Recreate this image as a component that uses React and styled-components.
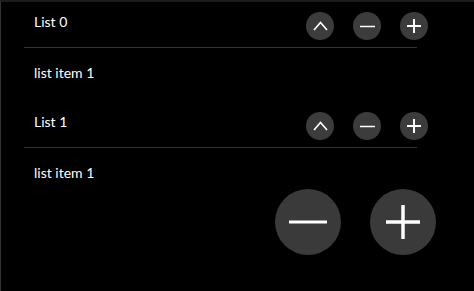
import React from "react";
import styled, { createGlobalStyle } from "styled-components";

const GlobalStyle = createGlobalStyle`
  html, body {
    margin: 0;
    padding: 0;
    background: #000;
  }
  body {
    font-family: Lato, "Open Sans", sans-serif;
    color: #fff;
  }
`;

const lists = [
  { title: "List 0", items: ["list item 1"] },
  { title: "List 1", items: ["list item 1"] },
];

const App = () => {
  return (
    <Page>
      <GlobalStyle />
      {lists.map((list) => (
        <Section key={list.title}>
          <Header>
            <Title>{list.title}</Title>
            <Actions>
              <RoundButton aria-label="collapse">
                <ChevronUp />
              </RoundButton>
              <RoundButton aria-label="remove">
                <Minus size={15} stroke={1.5} />
              </RoundButton>
              <RoundButton aria-label="add">
                <Plus size={14} stroke={2} />
              </RoundButton>
            </Actions>
          </Header>
          <Divider />
          {list.items.map((item) => (
            <Item key={item}>{item}</Item>
          ))}
        </Section>
      ))}
      <Fabs>
        <Fab aria-label="remove list">
          <Minus size={38} stroke={3} />
        </Fab>
        <Fab aria-label="add list">
          <Plus size={34} stroke={3.5} />
        </Fab>
      </Fabs>
    </Page>
  );
};

export default App;

const ChevronUp = () => (
  <svg width="15" height="10" viewBox="0 0 15 10">
    <path d="M1 9 L7.5 1.5 L14 9" fill="none" stroke="#fff" strokeWidth="1.6" />
  </svg>
);

const Minus = ({ size, stroke }) => (
  <svg width={size} height={size} viewBox={`0 0 ${size} ${size}`}>
    <line x1="0" y1={size / 2} x2={size} y2={size / 2} stroke="#fff" strokeWidth={stroke} />
  </svg>
);

const Plus = ({ size, stroke }) => (
  <svg width={size} height={size} viewBox={`0 0 ${size} ${size}`}>
    <line x1="0" y1={size / 2} x2={size} y2={size / 2} stroke="#fff" strokeWidth={stroke} />
    <line x1={size / 2} y1="0" x2={size / 2} y2={size} stroke="#fff" strokeWidth={stroke} />
  </svg>
);

const Page = styled.div`
  position: relative;
  box-sizing: border-box;
  height: 291px;
  background: #000;
  border-top: 2px solid #1c1c1c;
  border-left: 1px solid #333;
  overflow: hidden;
`;

const Section = styled.section`
  height: 100px;
`;

const Header = styled.div`
  display: flex;
  align-items: flex-start;
  box-sizing: border-box;
  height: 45px;
  padding: 10px 0 0 33px;
  margin-right: 46px;
`;

const Title = styled.div`
  flex: 1;
  font-size: 14px;
  line-height: 20px;
`;

const Actions = styled.div`
  display: flex;
  gap: 19px;
`;

const RoundButton = styled.button`
  display: flex;
  align-items: center;
  justify-content: center;
  width: 28px;
  height: 28px;
  padding: 0;
  border: none;
  border-radius: 50%;
  background: #3c3c3c;
`;

const Divider = styled.div`
  height: 1px;
  background: #333;
  margin: 0 57px 0 23px;
`;

const Item = styled.div`
  padding: 15px 0 0 33px;
  font-size: 14px;
  line-height: 20px;
`;

const Fabs = styled.div`
  position: absolute;
  right: 38px;
  bottom: 36px;
  display: flex;
  gap: 29px;
`;

const Fab = styled.button`
  display: flex;
  align-items: center;
  justify-content: center;
  width: 66px;
  height: 66px;
  padding: 0;
  border: none;
  border-radius: 50%;
  background: #3a3a3a;
`;
